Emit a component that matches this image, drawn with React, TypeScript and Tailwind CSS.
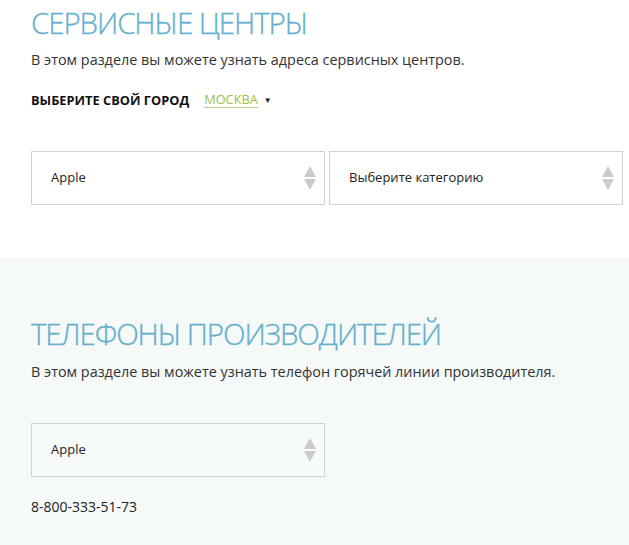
function Arrows() {
  return (
    <span className="flex flex-col items-center gap-[2px]">
      <svg width="12" height="11" viewBox="0 0 12 11">
        <path d="M6 0 L12 11 L0 11 Z" fill="#cbcbcb" />
      </svg>
      <svg width="12" height="11" viewBox="0 0 12 11">
        <path d="M0 0 L12 0 L6 11 Z" fill="#cbcbcb" />
      </svg>
    </span>
  );
}

function SelectBox({ label, bg = "bg-white" }: { label: string; bg?: string }) {
  return (
    <div
      className={`flex h-[54px] w-[294px] shrink-0 items-center justify-between border border-[#cfd3d3] pl-[19px] pr-[8px] ${bg}`}
    >
      <span className="text-[13px] text-[#222]">{label}</span>
      <Arrows />
    </div>
  );
}

export default function App() {
  return (
    <div
      className="flex min-h-[545px] w-full flex-col bg-white text-[#222]"
      style={{ fontFamily: '"Open Sans", "Liberation Sans", sans-serif' }}
    >
      <section className="h-[258px] pl-[31px] pr-[6px] pt-[3px]">
        <h1 className="text-[29.5px] font-light leading-[40px] tracking-[-1.1px] text-[#65afce] [-webkit-text-stroke:0.3px_#65afce]">
          СЕРВИСНЫЕ ЦЕНТРЫ
        </h1>
        <p className="mt-[7px] text-[14.4px] leading-[20px] text-[#333]">
          В этом разделе вы можете узнать адреса сервисных центров.
        </p>
        <div className="mt-[21px] flex items-center text-[12.8px] leading-[18px]">
          <span className="font-bold text-[#111]">ВЫБЕРИТЕ СВОЙ ГОРОД</span>
          <span className="ml-[15px] border-b border-[#b5cf7c] leading-[15px] text-[#9dc140]">
            МОСКВА
          </span>
          <span className="ml-[6px] text-[8px] text-[#222]">▼</span>
        </div>
        <div className="mt-[42px] flex gap-[4px]">
          <SelectBox label="Apple" />
          <SelectBox label="Выберите категорию" />
        </div>
      </section>
      <section className="flex-1 bg-[#f5f9f8] pl-[31px] pr-[6px] pt-[56px]">
        <h2 className="text-[29.5px] font-light leading-[40px] tracking-[-1.1px] text-[#65afce] [-webkit-text-stroke:0.3px_#65afce]">
          ТЕЛЕФОНЫ ПРОИЗВОДИТЕЛЕЙ
        </h2>
        <p className="mt-[8px] text-[14.4px] leading-[20px] text-[#333]">
          В этом разделе вы можете узнать телефон горячей линии производителя.
        </p>
        <div className="mt-[41px]">
          <SelectBox label="Apple" bg="bg-[#f7fafa]" />
        </div>
        <p className="mt-[20px] text-[14px] leading-[20px] text-[#222]">8-800-333-51-73</p>
      </section>
    </div>
  );
}
